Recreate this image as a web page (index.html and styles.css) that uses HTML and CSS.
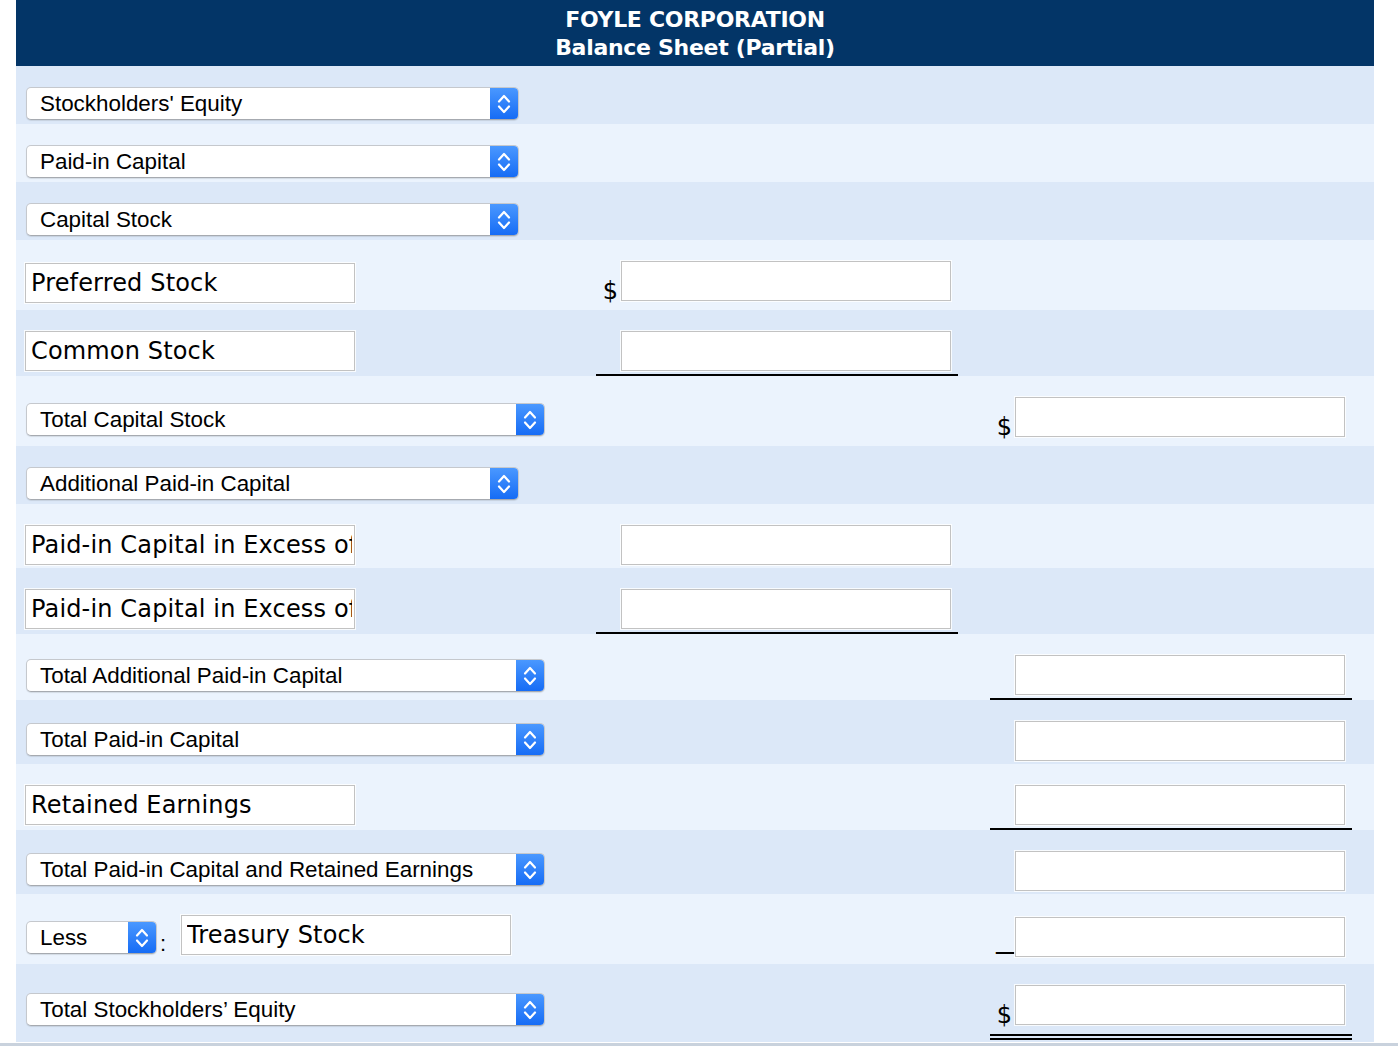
FILE: index.html
```html
<!DOCTYPE html>
<html lang="en">
<head>
    <meta charset="UTF-8">
    <title>Foyle Corporation - Balance Sheet (Partial)</title>
    <link rel="stylesheet" href="styles.css">
</head>
<body>
    <div class="sheet">
        <div class="sheet-head">
            <div>FOYLE CORPORATION</div>
            <div>Balance Sheet (Partial)</div>
        </div>

        <div class="sheet-body">
            <div class="row heading">
                <div class="select"><span class="select-text">Stockholders' Equity</span><span class="select-arrow"><svg width="14" height="22" viewBox="0 0 14 22"><path d="M2 8.5 L7 3 L12 8.5 M2 13.5 L7 19 L12 13.5"/></svg></span></div>
            </div>

            <div class="row heading">
                <div class="select"><span class="select-text">Paid-in Capital</span><span class="select-arrow"><svg width="14" height="22" viewBox="0 0 14 22"><path d="M2 8.5 L7 3 L12 8.5 M2 13.5 L7 19 L12 13.5"/></svg></span></div>
            </div>

            <div class="row heading">
                <div class="select"><span class="select-text">Capital Stock</span><span class="select-arrow"><svg width="14" height="22" viewBox="0 0 14 22"><path d="M2 8.5 L7 3 L12 8.5 M2 13.5 L7 19 L12 13.5"/></svg></span></div>
            </div>

            <div class="row pad-7">
                <input class="field label lower-2" type="text" value="Preferred Stock">
                <div class="amount col-sub"><span class="sign">$</span><input class="field" type="text"></div>
            </div>

            <div class="row">
                <input class="field label" type="text" value="Common Stock">
                <div class="amount col-sub ruled"><span class="sign"></span><input class="field" type="text"></div>
            </div>

            <div class="row pad-9">
                <div class="select wide lower-6"><span class="select-text">Total Capital Stock</span><span class="select-arrow"><svg width="14" height="22" viewBox="0 0 14 22"><path d="M2 8.5 L7 3 L12 8.5 M2 13.5 L7 19 L12 13.5"/></svg></span></div>
                <div class="amount col-total"><span class="sign">$</span><input class="field" type="text"></div>
            </div>

            <div class="row heading">
                <div class="select"><span class="select-text">Additional Paid-in Capital</span><span class="select-arrow"><svg width="14" height="22" viewBox="0 0 14 22"><path d="M2 8.5 L7 3 L12 8.5 M2 13.5 L7 19 L12 13.5"/></svg></span></div>
            </div>

            <div class="row pad-3">
                <input class="field label" type="text" value="Paid-in Capital in Excess of Par—Preferred Stock">
                <div class="amount col-sub"><span class="sign"></span><input class="field" type="text"></div>
            </div>

            <div class="row">
                <input class="field label" type="text" value="Paid-in Capital in Excess of Par—Common Stock">
                <div class="amount col-sub ruled"><span class="sign"></span><input class="field" type="text"></div>
            </div>

            <div class="row">
                <div class="select wide lower-4"><span class="select-text">Total Additional Paid-in Capital</span><span class="select-arrow"><svg width="14" height="22" viewBox="0 0 14 22"><path d="M2 8.5 L7 3 L12 8.5 M2 13.5 L7 19 L12 13.5"/></svg></span></div>
                <div class="amount col-total ruled"><span class="sign"></span><input class="field" type="text"></div>
            </div>

            <div class="row pad-3">
                <div class="select wide lower-2"><span class="select-text">Total Paid-in Capital</span><span class="select-arrow"><svg width="14" height="22" viewBox="0 0 14 22"><path d="M2 8.5 L7 3 L12 8.5 M2 13.5 L7 19 L12 13.5"/></svg></span></div>
                <div class="amount col-total"><span class="sign"></span><input class="field" type="text"></div>
            </div>

            <div class="row">
                <input class="field label" type="text" value="Retained Earnings">
                <div class="amount col-total ruled"><span class="sign"></span><input class="field" type="text"></div>
            </div>

            <div class="row pad-3">
                <div class="select wide lower-2"><span class="select-text">Total Paid-in Capital and Retained Earnings</span><span class="select-arrow"><svg width="14" height="22" viewBox="0 0 14 22"><path d="M2 8.5 L7 3 L12 8.5 M2 13.5 L7 19 L12 13.5"/></svg></span></div>
                <div class="amount col-total"><span class="sign"></span><input class="field" type="text"></div>
            </div>

            <div class="row pad-7">
                <div class="label-group">
                    <div class="select short lower-6"><span class="select-text">Less</span><span class="select-arrow"><svg width="14" height="22" viewBox="0 0 14 22"><path d="M2 8.5 L7 3 L12 8.5 M2 13.5 L7 19 L12 13.5"/></svg></span></div>
                    <span class="colon">:</span>
                    <input class="field" type="text" value="Treasury Stock">
                </div>
                <div class="amount col-total lower-2"><span class="sign dash">_</span><input class="field" type="text"></div>
            </div>

            <div class="row pad-2">
                <div class="select wide lower-8"><span class="select-text">Total Stockholders’ Equity</span><span class="select-arrow"><svg width="14" height="22" viewBox="0 0 14 22"><path d="M2 8.5 L7 3 L12 8.5 M2 13.5 L7 19 L12 13.5"/></svg></span></div>
                <div class="amount col-total double"><span class="sign">$</span><input class="field" type="text"></div>
            </div>
        </div>
    </div>
    <div class="page-foot"></div>
</body>
</html>
```

FILE: styles.css
```css
* {
    margin: 0;
    padding: 0;
    box-sizing: border-box;
}

body {
    font-family: "DejaVu Sans", Verdana, sans-serif;
    background-color: #fff;
    color: #000;
}

.sheet {
    width: 1358px;
    margin-left: 16px;
}

.sheet-head {
    height: 66px;
    padding-top: 6px;
    background: #033567;
    color: #fff;
    text-align: center;
    font-weight: bold;
    font-size: 22px;
    line-height: 28px;
    letter-spacing: -0.3px;
}

/* label | sub amounts | gap | totals */
.row {
    display: grid;
    grid-template-columns: 570px 362px 32px 362px;
    align-items: start;
    padding: 21px 0 0 10px;
    background: #ebf3fd;
}

.sheet-body .row:nth-child(odd) {
    background: #dce8f8;
}

.row.heading { padding-bottom: 4px; }
.row.pad-2 { padding-bottom: 2px; }
.row.pad-3 { padding-bottom: 3px; }
.row.pad-7 { padding-bottom: 7px; }
.row.pad-9 { padding-bottom: 9px; }

.lower-2 { margin-top: 2px; }
.lower-4 { margin-top: 4px; }
.lower-6 { margin-top: 6px; }
.lower-8 { margin-top: 8px; }

.select {
    display: flex;
    width: 493px;
    height: 33px;
    border: 1px solid #c5c8cd;
    border-bottom-color: #a6aab0;
    border-radius: 5px;
    background: #fff;
    overflow: hidden;
    box-shadow: 0 1px 1px rgba(0,0,0,0.1);
}

.select.wide { width: 519px; }
.select.short { width: 131px; }

.select-text {
    flex: 1;
    padding-left: 13px;
    font-family: "Liberation Sans", Arial, sans-serif;
    font-size: 22.4px;
    line-height: 31px;
    white-space: nowrap;
    overflow: hidden;
}

.select-arrow {
    width: 28px;
    display: flex;
    align-items: center;
    justify-content: center;
    background: linear-gradient(#4a98ff, #166cf5);
}

.select-arrow svg {
    fill: none;
    stroke: #fff;
    stroke-width: 2.2;
    stroke-linecap: round;
    stroke-linejoin: round;
}

.field {
    width: 330px;
    height: 40px;
    padding: 0 2px 0 5px;
    border: 1px solid #c2c2c2;
    background: #fff;
    color: #000;
    font-family: "DejaVu Sans", Verdana, sans-serif;
    font-size: 24px;
    letter-spacing: 0.15px;
    outline: none;
    box-shadow: 0 0 0 1px rgba(255,255,255,0.8);
}

.field.label {
    margin-left: -1px;
}

.label-group {
    display: flex;
    align-items: flex-start;
}

.colon {
    width: 24px;
    margin-top: 18px;
    padding-left: 3px;
    font-family: "Liberation Sans", Arial, sans-serif;
    font-size: 22px;
    line-height: 22px;
}

.amount {
    display: flex;
    align-items: flex-end;
    padding-right: 7px;
}

.col-sub { grid-column: 2; }
.col-total { grid-column: 4; }

.amount.ruled {
    padding-bottom: 3px;
    border-bottom: 2px solid #000;
}

.amount.double {
    padding-bottom: 9px;
    border-bottom: 6px double #000;
}

.sign {
    width: 25px;
    padding-right: 3px;
    margin-bottom: -2px;
    text-align: right;
    font-size: 24px;
    line-height: 24px;
}

.sign.dash {
    padding-right: 1px;
    margin-bottom: 4px;
    font-family: "Liberation Sans", Arial, sans-serif;
    font-size: 32px;
    line-height: 32px;
}

.page-foot {
    height: 10px;
    margin-top: 1px;
    background: #c9d2dd;
}
```
